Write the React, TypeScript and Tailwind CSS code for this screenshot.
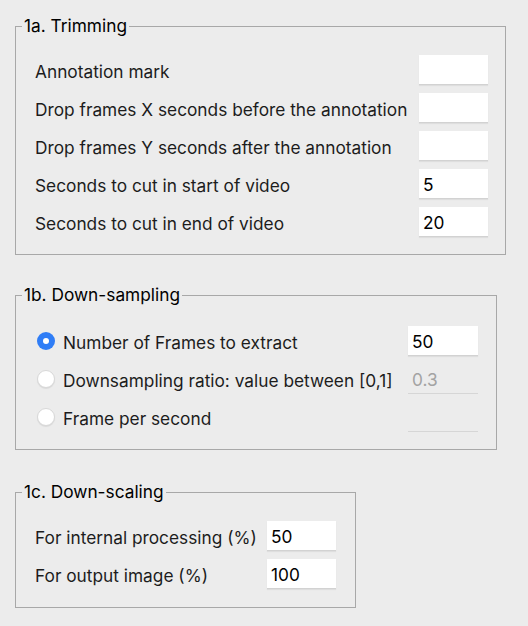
import React from 'react'

const font = { fontFamily: 'Inter, "Liberation Sans", sans-serif' }

function Field({ value = '', width = 'w-[69px]' }: { value?: string; width?: string }) {
  return (
    <div
      className={`${width} h-[30px] bg-white border-b border-[#d2d2d2] shadow-[0_1px_1px_rgba(0,0,0,0.06)] pl-[4px] pt-[3px] flex items-center text-black shrink-0`}
    >
      {value}
    </div>
  )
}

function DisabledField({ value = '' }: { value?: string }) {
  return (
    <div className="w-[70px] h-[30px] border-b border-[#d6d6d6] pl-[4px] pt-[3px] flex items-center text-[#a3a3a3] shrink-0">
      {value}
    </div>
  )
}

function Radio({ checked = false }: { checked?: boolean }) {
  if (checked) {
    return (
      <span className="w-[18px] h-[18px] rounded-full bg-[#2f7df6] flex items-center justify-center shrink-0">
        <span className="w-[6px] h-[6px] rounded-full bg-white" />
      </span>
    )
  }
  return (
    <span className="w-[18px] h-[18px] rounded-full bg-white border border-[#d8d8d8] shadow-[0_1px_1px_rgba(0,0,0,0.08)] shrink-0" />
  )
}

function Label({ children }: { children: React.ReactNode }) {
  return <span className="pt-[4px]">{children}</span>
}

function Group({
  title,
  className,
  children,
}: {
  title: string
  className: string
  children: React.ReactNode
}) {
  return (
    <fieldset className={`border border-[#a8a8a8] p-0 ${className}`}>
      <legend className="ml-[6px] px-[2px] leading-[22px] text-black">{title}</legend>
      {children}
    </fieldset>
  )
}

export default function App() {
  const trimming = [
    ['Annotation mark', ''],
    ['Drop frames X seconds before the annotation', ''],
    ['Drop frames Y seconds after the annotation', ''],
    ['Seconds to cut in start of video', '5'],
    ['Seconds to cut in end of video', '20'],
  ]

  return (
    <div
      className="w-[528px] h-[626px] bg-[#ececec] text-[17.3px] text-[#1c1c1c] pt-[15px] pl-[15px] flex flex-col overflow-hidden whitespace-nowrap"
      style={font}
    >
      {/* 1a */}
      <Group title="1a. Trimming" className="w-[491px]">
        <div className="flex flex-col gap-[8px] pt-[18px] pb-[17px] pl-[19px] pr-[17px]">
          {trimming.map(([label, value]) => (
            <div key={label} className="flex items-center justify-between h-[30px]">
              <Label>{label}</Label>
              <Field value={value} />
            </div>
          ))}
        </div>
      </Group>

      {/* 1b */}
      <Group title="1b. Down-sampling" className="mt-[29px] w-[482px]">
        <div className="flex flex-col gap-[8px] pt-[20px] pb-[17px] pl-[21px] pr-[18px]">
          <div className="flex items-center justify-between h-[30px]">
            <div className="flex items-center gap-[8px]">
              <Radio checked />
              <Label>Number of Frames to extract</Label>
            </div>
            <Field value="50" width="w-[70px]" />
          </div>
          <div className="flex items-center justify-between h-[30px]">
            <div className="flex items-center gap-[8px]">
              <Radio />
              <Label>Downsampling ratio: value between [0,1]</Label>
            </div>
            <DisabledField value="0.3" />
          </div>
          <div className="flex items-center justify-between h-[30px]">
            <div className="flex items-center gap-[8px]">
              <Radio />
              <Label>Frame per second</Label>
            </div>
            <DisabledField />
          </div>
        </div>
      </Group>

      {/* 1c */}
      <Group title="1c. Down-scaling" className="mt-[31px] w-[341px]">
        <div className="flex flex-col gap-[8px] pt-[18px] pb-[18px] pl-[19px] pr-[19px]">
          <div className="flex items-center justify-between h-[30px]">
            <Label>For internal processing (%)</Label>
            <Field value="50" />
          </div>
          <div className="flex items-center justify-between h-[30px]">
            <Label>For output image (%)</Label>
            <Field value="100" />
          </div>
        </div>
      </Group>
    </div>
  )
}
